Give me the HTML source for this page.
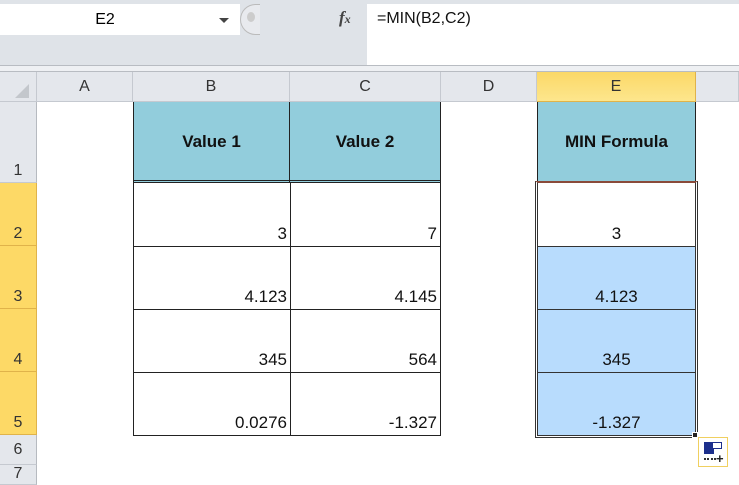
<!DOCTYPE html>
<html><head><style>
*{margin:0;padding:0;box-sizing:border-box}
body{width:739px;height:478px;overflow:hidden;background:#fff;font-family:"Liberation Sans",sans-serif;position:relative}
.a{position:absolute}
.hd{background:#e4e7ec;border-right:1px solid #c5c9d0;border-bottom:1px solid #c5c9d0;color:#333;font-size:16px;display:flex;justify-content:center;align-items:center}
.rh{background:#e4e7ec;border-bottom:1px solid #c5c9d0;border-right:1px solid #b6bac0;color:#333;font-size:16px;display:flex;justify-content:center;align-items:flex-end;padding-bottom:2px}
.sel{background:#fdd966;border-color:#e0b34a}
.hd.sel{background:linear-gradient(#fbd867,#fde68d)}
.c{font-size:17px;color:#111;display:flex;align-items:flex-end;padding:0 3px 2px}
.h{background:#92cddc;font-weight:bold;font-size:17px;color:#111;display:flex;justify-content:center;align-items:center}
</style></head><body>
<div class="a" style="left:0;top:0;width:739px;height:66px;background:#dfe3e8;border-bottom:1px solid #b8bcc2"></div>
<div class="a" style="left:0;top:4px;width:240px;height:31px;background:#fff;font-size:16px;display:flex;align-items:center;justify-content:center;padding-right:30px">E2</div>
<div class="a" style="left:219px;top:18px;width:0;height:0;border-left:5px solid transparent;border-right:5px solid transparent;border-top:5px solid #444"></div>
<div class="a" style="left:240px;top:4px;width:20px;height:31px;border-radius:16px 0 0 16px;border:1px solid #bbb;border-right:none;background:#e8eaee"></div>
<div class="a" style="left:247px;top:12px;width:8px;height:10px;border-radius:50%;background:#ccc"></div>
<div class="a" style="left:339px;top:8px;font-family:'Liberation Serif',serif;font-style:italic;font-weight:bold;font-size:17px;color:#444">f<span style="font-size:12px">x</span></div>
<div class="a" style="left:367px;top:4px;width:372px;height:61px;background:#fff;font-size:16px;padding:6px 0 0 10px;color:#111">=MIN(B2,C2)</div>
<div class="a" style="left:0;top:66px;width:739px;height:6px;background:#eef0f3;border-bottom:1px solid #b8bcc2"></div>
<div class="a hd" style="left:0;top:72px;width:37px;height:30px"><div style="width:0;height:0;border-left:14px solid transparent;border-bottom:14px solid #c3c7cc;margin:8px 0 0 8px"></div></div>
<div class="a hd" style="left:37px;top:72px;width:96px;height:30px">A</div>
<div class="a hd" style="left:133px;top:72px;width:157px;height:30px">B</div>
<div class="a hd" style="left:290px;top:72px;width:151px;height:30px">C</div>
<div class="a hd" style="left:441px;top:72px;width:96px;height:30px">D</div>
<div class="a hd sel" style="left:537px;top:72px;width:159px;height:30px">E</div>
<div class="a hd" style="left:696px;top:72px;width:43px;height:30px"></div>
<div class="a rh" style="left:0;top:102px;width:37px;height:81px">1</div>
<div class="a rh sel" style="left:0;top:183px;width:37px;height:63px">2</div>
<div class="a rh sel" style="left:0;top:246px;width:37px;height:63px">3</div>
<div class="a rh sel" style="left:0;top:309px;width:37px;height:63px">4</div>
<div class="a rh sel" style="left:0;top:372px;width:37px;height:63px">5</div>
<div class="a rh" style="left:0;top:435px;width:37px;height:30px;align-items:center;padding:0">6</div>
<div class="a rh" style="left:0;top:465px;width:37px;height:20px;align-items:flex-start;padding:0">7</div>
<div class="a h" style="left:133px;top:102px;width:157px;height:80px;border-left:1px solid #222;border-right:1px solid #222">Value 1</div>
<div class="a h" style="left:290px;top:102px;width:151px;height:80px;border-right:1px solid #222">Value 2</div>
<div class="a" style="left:133px;top:180px;width:308px;height:3px;border-top:1px solid #222;border-bottom:1px solid #222"></div>
<div class="a" style="left:133px;top:183px;width:308px;height:253px;border:1px solid #222;border-top:none"></div>
<div class="a" style="left:290px;top:183px;width:1px;height:252px;background:#222"></div>
<div class="a" style="left:133px;top:246px;width:308px;height:1px;background:#222"></div>
<div class="a" style="left:133px;top:309px;width:308px;height:1px;background:#222"></div>
<div class="a" style="left:133px;top:372px;width:308px;height:1px;background:#222"></div>
<div class="a c" style="left:134px;top:183px;width:156px;height:63px;justify-content:flex-end">3</div>
<div class="a c" style="left:291px;top:183px;width:149px;height:63px;justify-content:flex-end">7</div>
<div class="a c" style="left:134px;top:246px;width:156px;height:63px;justify-content:flex-end">4.123</div>
<div class="a c" style="left:291px;top:246px;width:149px;height:63px;justify-content:flex-end">4.145</div>
<div class="a c" style="left:134px;top:309px;width:156px;height:63px;justify-content:flex-end">345</div>
<div class="a c" style="left:291px;top:309px;width:149px;height:63px;justify-content:flex-end">564</div>
<div class="a c" style="left:134px;top:372px;width:156px;height:63px;justify-content:flex-end">0.0276</div>
<div class="a c" style="left:291px;top:372px;width:149px;height:63px;justify-content:flex-end">-1.327</div>
<div class="a h" style="left:537px;top:102px;width:159px;height:80px;border-left:1px solid #222;border-right:1px solid #222">MIN Formula</div>
<div class="a" style="left:537px;top:246px;width:159px;height:189px;background:#b8dcfd"></div>
<div class="a" style="left:535px;top:181px;width:163px;height:257px;border:3px double #333;border-top:2px solid #8a4a3a"></div>
<div class="a" style="left:538px;top:246px;width:157px;height:1px;background:#333"></div>
<div class="a" style="left:538px;top:309px;width:157px;height:1px;background:#333"></div>
<div class="a" style="left:538px;top:372px;width:157px;height:1px;background:#333"></div>
<div class="a c" style="left:537px;top:183px;width:159px;height:63px;justify-content:center">3</div>
<div class="a c" style="left:537px;top:246px;width:159px;height:63px;justify-content:center">4.123</div>
<div class="a c" style="left:537px;top:309px;width:159px;height:63px;justify-content:center">345</div>
<div class="a c" style="left:537px;top:372px;width:159px;height:63px;justify-content:center">-1.327</div>
<div class="a" style="left:692px;top:432px;width:6px;height:6px;background:#222;border:1px solid #fff"></div>
<div class="a" style="left:698px;top:437px;width:30px;height:30px;border:1px solid #f0d060;background:#fff">
<div class="a" style="left:5px;top:4px;width:10px;height:12px;background:#1c2f8c"></div>
<div class="a" style="left:13px;top:4px;width:10px;height:7px;border:1px solid #1c2f8c;background:#fff"></div>
<div class="a" style="left:5px;top:20px;width:12px;height:0;border-top:2px dotted #333"></div>
<div class="a" style="left:17px;top:13px;font-size:13px;font-weight:bold;color:#222">+</div>
</div>
</body></html>
